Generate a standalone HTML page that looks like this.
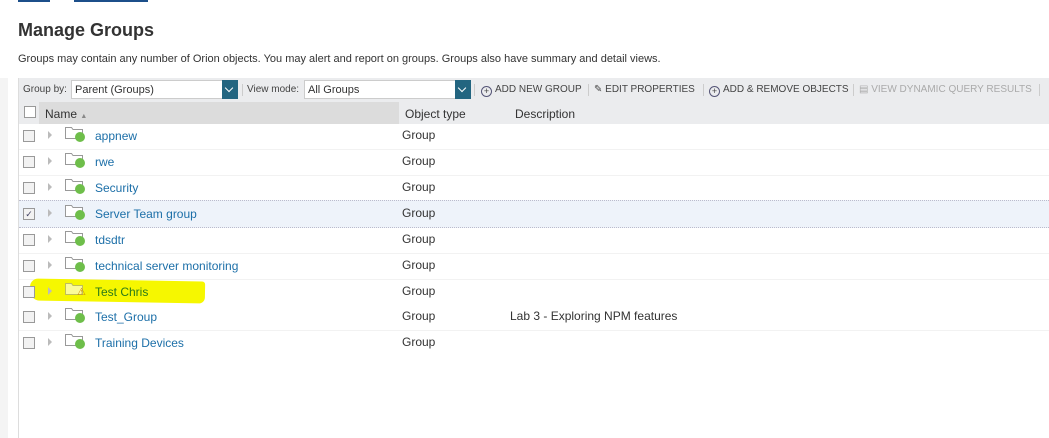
<!DOCTYPE html>
<html><head><style>
body{margin:0;width:1049px;height:437px;background:#fff;font-family:"Liberation Sans",sans-serif;position:relative;overflow:hidden;color:#333}
.a{position:absolute}
h1{position:absolute;left:18px;top:20px;margin:0;font-size:18px;font-weight:bold;color:#333}
.row{position:absolute;left:19px;width:1030px;height:26px;border-bottom:1px solid #f2f2f2;font-size:12px}
.cb{position:absolute;left:4px;top:7px;width:10px;height:10px;border:1px solid #999;background:#f2f2f2}
.tri{position:absolute;left:29px;top:8px;width:0;height:0;border-left:4px solid #bbb;border-top:4px solid transparent;border-bottom:4px solid transparent}
.fold{position:absolute;left:46px;top:3px}
.dot{position:absolute;left:56px;top:9px;width:10px;height:10px;border-radius:50%;background:#6ebe4a}
.nm{position:absolute;left:76px;top:6px;color:#1c6fa8}
.ty{position:absolute;left:383px;top:5px}
.tb{font-size:10px;color:#444;top:84px}
.sel{position:absolute;height:17px;border:1px solid #ccc;background:#fff;font-size:11px;top:80px}
.sel span{position:absolute;left:3px;top:3px}
.dd{position:absolute;right:-1px;top:-1px;width:16px;height:19px;background:#236580}
.dd:after{content:"";position:absolute;left:4px;top:5px;width:5px;height:5px;border-right:1.5px solid #fff;border-bottom:1.5px solid #fff;transform:rotate(45deg)}
.sep{position:absolute;top:84px;width:1px;height:12px;background:#ccc}
.pl{display:inline-block;width:9px;height:9px;border:1px solid #557;border-radius:50%;text-align:center;line-height:9px;font-size:9px;margin-right:3px;vertical-align:-2px}
</style></head><body>
<svg width="0" height="0" style="position:absolute"><defs><g id="f"><path d="M0.5 12.5V1.5H6.5L8 3.5H17.5V12.5Z" fill="#fff" stroke="#999"/></g></defs></svg>
<div class="a" style="left:18px;top:0;width:32px;height:2px;background:#1c4f8a"></div>
<div class="a" style="left:74px;top:0;width:74px;height:2px;background:#1c4f8a"></div>
<div class="a" style="left:0;top:78px;width:8px;height:360px;background:#f4f4f4"></div>
<div class="a" style="left:18px;top:78px;width:1px;height:360px;background:#ddd"></div>
<h1>Manage Groups</h1>
<div class="a" style="left:18px;top:53px;font-size:11px;color:#333">Groups may contain any number of Orion objects. You may alert and report on groups. Groups also have summary and detail views.</div>
<div class="a" style="left:19px;top:78px;width:1030px;height:24px;background:#ebecee"></div>
<div class="a tb" style="left:23px">Group by:</div>
<div class="sel" style="left:71px;width:165px"><span>Parent (Groups)</span><div class="dd"></div></div>
<div class="sep" style="left:242px"></div>
<div class="a tb" style="left:247px">View mode:</div>
<div class="sel" style="left:304px;width:165px"><span>All Groups</span><div class="dd"></div></div>
<div class="sep" style="left:474px"></div>
<div class="a tb" style="left:481px"><span class="pl">+</span>ADD NEW GROUP</div>
<div class="sep" style="left:588px"></div>
<div class="a tb" style="left:594px">✎ EDIT PROPERTIES</div>
<div class="sep" style="left:703px"></div>
<div class="a tb" style="left:709px"><span class="pl">+</span>ADD &amp; REMOVE OBJECTS</div>
<div class="sep" style="left:853px"></div>
<div class="a tb" style="left:859px;color:#aaa">▤ VIEW DYNAMIC QUERY RESULTS</div>
<div class="sep" style="left:1039px"></div>
<div class="a" style="left:19px;top:102px;width:1030px;height:22px;background:#ebecee"></div>
<div class="a" style="left:39px;top:102px;width:360px;height:22px;background:#dcdcdc"></div>
<div class="cb" style="left:24px;top:106px;background:#fff"></div>
<div class="a" style="left:45px;top:107px;font-size:12px">Name <span style="font-size:7px;color:#888">▲</span></div>
<div class="a" style="left:405px;top:107px;font-size:12px">Object type</div>
<div class="a" style="left:515px;top:107px;font-size:12px">Description</div>

<div class="row" style="top:123px"><div class="cb"></div><div class="tri"></div><svg class="fold" width="19" height="14"><use href="#f"/></svg><div class="dot"></div><div class="nm">appnew</div><div class="ty">Group</div></div>
<div class="row" style="top:149px"><div class="cb"></div><div class="tri"></div><svg class="fold" width="19" height="14"><use href="#f"/></svg><div class="dot"></div><div class="nm">rwe</div><div class="ty">Group</div></div>
<div class="row" style="top:175px"><div class="cb"></div><div class="tri"></div><svg class="fold" width="19" height="14"><use href="#f"/></svg><div class="dot"></div><div class="nm">Security</div><div class="ty">Group</div></div>
<div class="row" style="top:200px;background:#eef3fa;border-top:1px dotted #bbc;border-bottom:1px dotted #bbc"><div class="cb" style="font-size:9px;line-height:10px;text-align:center;color:#446">✓</div><div class="tri"></div><svg class="fold" width="19" height="14"><use href="#f"/></svg><div class="dot"></div><div class="nm">Server Team group</div><div class="ty">Group</div></div>
<div class="row" style="top:227px"><div class="cb"></div><div class="tri"></div><svg class="fold" width="19" height="14"><use href="#f"/></svg><div class="dot"></div><div class="nm">tdsdtr</div><div class="ty">Group</div></div>
<div class="row" style="top:253px"><div class="cb"></div><div class="tri"></div><svg class="fold" width="19" height="14"><use href="#f"/></svg><div class="dot"></div><div class="nm">technical server monitoring</div><div class="ty">Group</div></div>
<div class="a" style="left:30px;top:280px;width:175px;height:22px;background:#f6f700;border-radius:8px 3px 6px 10px;transform:rotate(1deg)"></div>
<div class="row" style="top:279px;border-color:transparent"><div class="cb"></div><div class="tri"></div><svg class="fold" width="19" height="14" style="opacity:.6"><use href="#f"/></svg><div class="a" style="left:58px;top:8px;color:#c80;font-size:10px">⚠</div><div class="nm" style="color:#2a7a1a">Test Chris</div><div class="ty">Group</div></div>
<div class="row" style="top:304px"><div class="cb"></div><div class="tri"></div><svg class="fold" width="19" height="14"><use href="#f"/></svg><div class="dot"></div><div class="nm">Test_Group</div><div class="ty">Group</div><div class="a" style="left:491px;top:5px">Lab 3 - Exploring NPM features</div></div>
<div class="row" style="top:330px;border-bottom:none"><div class="cb"></div><div class="tri"></div><svg class="fold" width="19" height="14"><use href="#f"/></svg><div class="dot"></div><div class="nm">Training Devices</div><div class="ty">Group</div></div>
</body></html>
